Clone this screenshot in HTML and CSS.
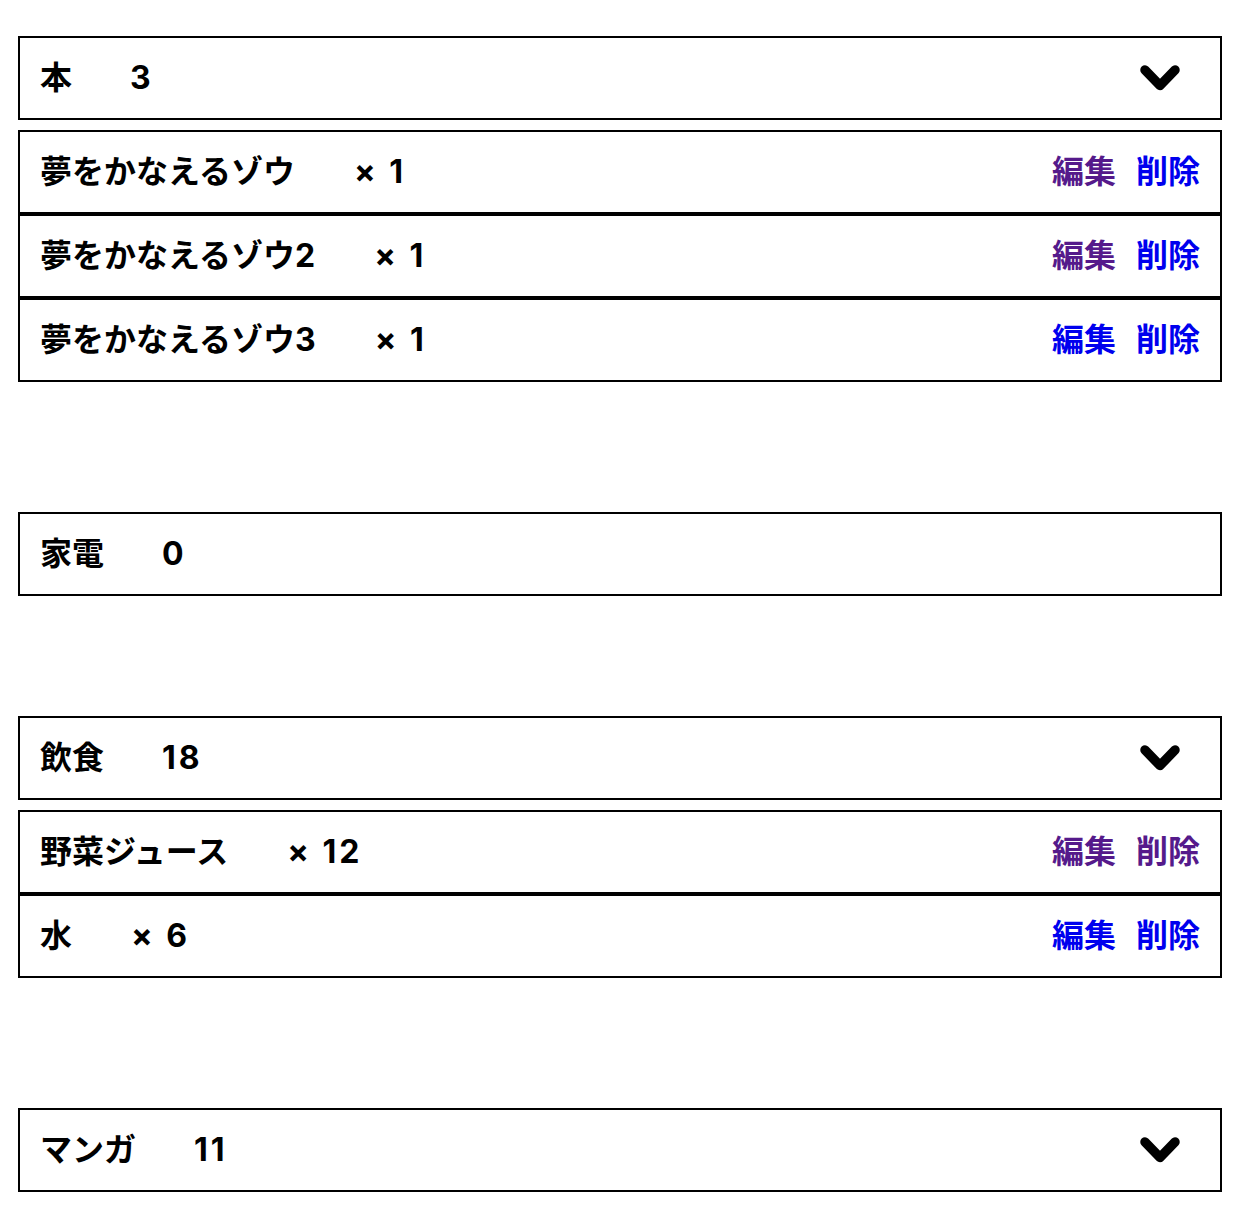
FILE: index.html
```html
<!DOCTYPE html>
<html lang="ja">
<head>
    <meta charset="UTF-8">
    <meta name="viewport" content="width=device-width, initial-scale=1.0">
    <title>在庫一覧</title>
    <link rel="stylesheet" href="styles.css">
</head>
<body>
    <div class="categories">
        <div class="category">
            <div class="category-header">
                <span class="category-name">本</span>
                <span class="category-count">3</span>
                <svg class="toggle" viewBox="0 0 40 26"><polyline points="5,5 20,20.5 35,5"/></svg>
            </div>
            <ul class="item-list">
                <li class="item">
                    <span class="item-name">夢をかなえるゾウ</span>
                    <span class="item-qty">× 1</span>
                    <span class="item-actions">
                        <a href="#" class="visited">編集</a>
                        <a href="#">削除</a>
                    </span>
                </li>
                <li class="item">
                    <span class="item-name">夢をかなえるゾウ2</span>
                    <span class="item-qty">× 1</span>
                    <span class="item-actions">
                        <a href="#" class="visited">編集</a>
                        <a href="#">削除</a>
                    </span>
                </li>
                <li class="item">
                    <span class="item-name">夢をかなえるゾウ3</span>
                    <span class="item-qty">× 1</span>
                    <span class="item-actions">
                        <a href="#">編集</a>
                        <a href="#">削除</a>
                    </span>
                </li>
            </ul>
        </div>

        <div class="category">
            <div class="category-header">
                <span class="category-name">家電</span>
                <span class="category-count">0</span>
            </div>
        </div>

        <div class="category">
            <div class="category-header">
                <span class="category-name">飲食</span>
                <span class="category-count">18</span>
                <svg class="toggle" viewBox="0 0 40 26"><polyline points="5,5 20,20.5 35,5"/></svg>
            </div>
            <ul class="item-list">
                <li class="item">
                    <span class="item-name">野菜ジュース</span>
                    <span class="item-qty">× 12</span>
                    <span class="item-actions">
                        <a href="#" class="visited">編集</a>
                        <a href="#" class="visited">削除</a>
                    </span>
                </li>
                <li class="item">
                    <span class="item-name">水</span>
                    <span class="item-qty">× 6</span>
                    <span class="item-actions">
                        <a href="#">編集</a>
                        <a href="#">削除</a>
                    </span>
                </li>
            </ul>
        </div>

        <div class="category">
            <div class="category-header">
                <span class="category-name">マンガ</span>
                <span class="category-count">11</span>
                <svg class="toggle" viewBox="0 0 40 26"><polyline points="5,5 20,20.5 35,5"/></svg>
            </div>
        </div>
    </div>
</body>
</html>
```

FILE: styles.css
```css
body {
    margin: 0;
    font-family: Inter, "Noto Sans CJK JP", sans-serif;
    font-weight: bold;
    font-size: 32px;
    color: #000;
    background: #fff;
}

.categories {
    padding: 36px 26px 0 18px;
}

.category {
    display: flow-root;
    margin-bottom: 120px;
}

.category-header,
.item {
    display: flex;
    align-items: center;
    height: 84px;
    box-sizing: border-box;
    padding: 0 20px 1px;
    border: 2px solid #000;
    line-height: 1;
}

.category-count {
    margin-left: 58px;
    letter-spacing: 3px;
}

.item-qty {
    margin-left: 59px;
    letter-spacing: 3px;
}

.toggle {
    width: 40px;
    height: 26px;
    margin: 0 20px 0 auto;
    fill: none;
    stroke: #000;
    stroke-width: 9.5;
    stroke-linecap: round;
    stroke-linejoin: round;
}

.item-list {
    list-style: none;
    margin: 10px 0;
    padding: 0;
}

.item-actions {
    margin-left: auto;
    display: flex;
    gap: 20px;
}

.item-actions a {
    color: #0000ee;
    text-decoration: none;
}

.item-actions a.visited {
    color: #551a8b;
}
```
